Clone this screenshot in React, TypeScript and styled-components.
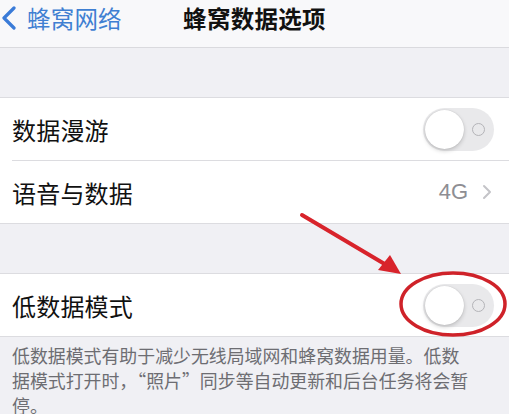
import React from 'react'
import styled, { createGlobalStyle } from 'styled-components'

const GlobalStyle = createGlobalStyle`
  html, body {
    margin: 0;
    padding: 0;
    background: #f0f0f4;
  }
  body {
    font-family: "Noto Sans CJK SC", "Noto Sans", sans-serif;
    color: #111;
  }
`

export default function App() {
  return (
    <Screen>
      <GlobalStyle />
      <NavBar>
        <BackButton>
          <svg width="16" height="24" viewBox="0 0 16 24">
            <path d="M13 2 L3 12 L13 22" fill="none" stroke="#3a7bd8" strokeWidth="3.2" strokeLinecap="round" strokeLinejoin="round" />
          </svg>
          <span>蜂窝网络</span>
        </BackButton>
        <NavTitle>蜂窝数据选项</NavTitle>
      </NavBar>

      <Gap />
      <Section>
        <Row>
          <Label>数据漫游</Label>
          <Toggle />
        </Row>
        <Divider />
        <Row>
          <Label>语音与数据</Label>
          <Detail>
            4G
            <svg width="10" height="16" viewBox="0 0 10 16">
              <path d="M2 2 L8 8 L2 14" fill="none" stroke="#c4c4c8" strokeWidth="2" strokeLinecap="round" strokeLinejoin="round" />
            </svg>
          </Detail>
        </Row>
      </Section>

      <Gap />
      <Section>
        <Row>
          <Label>低数据模式</Label>
          <Toggle />
        </Row>
      </Section>
      <Footer>
        低数据模式有助于减少无线局域网和蜂窝数据用量。低数<br />
        据模式打开时，“照片”同步等自动更新和后台任务将会暂<br />
        停。
      </Footer>

      <Annotation width="509" height="414" viewBox="0 0 509 414">
        <line x1="302" y1="215" x2="388" y2="266" stroke="#d8232b" strokeWidth="4" strokeLinecap="round" />
        <polygon points="401,274 378,270 390,255" fill="#d8232b" />
        <ellipse cx="453" cy="304" rx="52" ry="31" fill="none" stroke="#cf2229" strokeWidth="3.5" />
      </Annotation>
    </Screen>
  )
}

function Toggle() {
  return (
    <Track>
      <Knob />
      <OffMark />
    </Track>
  )
}

const Screen = styled.div`
  position: relative;
  width: 509px;
  height: 414px;
  overflow: hidden;
  background: #f0f0f4;
`

const NavBar = styled.div`
  position: relative;
  height: 47px;
  display: flex;
  align-items: center;
  justify-content: center;
  background: #f8f8fa;
  border-bottom: 1.5px solid #dadade;
`

const BackButton = styled.div`
  position: absolute;
  left: 1px;
  top: 6px;
  display: flex;
  align-items: center;
  gap: 10px;
  color: #3f7fd2;
  font-size: 23.5px;
  line-height: 24px;
  letter-spacing: 0.2px;
`

const NavTitle = styled.div`
  font-size: 23.5px;
  font-weight: 600;
  color: #111;
  margin-top: -11px;
  letter-spacing: 0.3px;
`

const Gap = styled.div`
  height: 49px;
`

const Section = styled.div`
  background: #fff;
  border-top: 1px solid #dcdce0;
  border-bottom: 1px solid #dcdce0;
`

const Row = styled.div`
  height: 62px;
  display: flex;
  align-items: center;
  justify-content: space-between;
  padding: 0 15px 0 12px;
`

const Divider = styled.div`
  height: 1px;
  margin-left: 12px;
  background: #dcdce0;
`

const Label = styled.div`
  font-size: 24px;
  color: #111;
  letter-spacing: 0.2px;
`

const Detail = styled.div`
  display: flex;
  align-items: center;
  gap: 14px;
  font-family: "Liberation Sans", "Noto Sans", sans-serif;
  font-size: 22px;
  color: #8e8e93;
  padding-right: 2px;
`

const Track = styled.div`
  position: relative;
  width: 71px;
  height: 43px;
  border-radius: 22px;
  background: #e9e9eb;
  flex-shrink: 0;
`

const Knob = styled.div`
  position: absolute;
  left: 2px;
  top: 2px;
  width: 39px;
  height: 39px;
  border-radius: 50%;
  background: #fff;
  box-shadow: 0 2px 4px rgba(0, 0, 0, 0.18), 0 0 1px rgba(0, 0, 0, 0.2);
`

const OffMark = styled.div`
  position: absolute;
  right: 9px;
  top: 15px;
  width: 11px;
  height: 11px;
  border-radius: 50%;
  border: 1.5px solid #b4b4b8;
`

const Footer = styled.div`
  padding: 6px 0 0 12px;
  font-size: 17.9px;
  line-height: 25px;
  color: #6d6d72;
  white-space: nowrap;
`

const Annotation = styled.svg`
  position: absolute;
  left: 0;
  top: 0;
  pointer-events: none;
`
